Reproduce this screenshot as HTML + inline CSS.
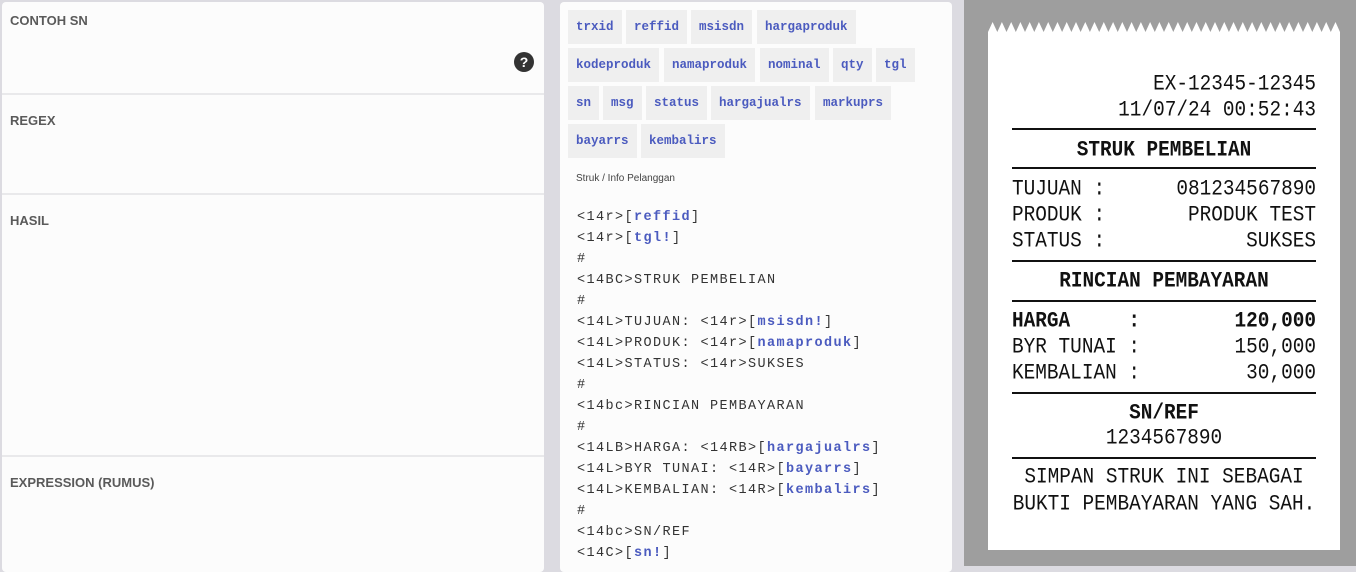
<!DOCTYPE html>
<html><head><meta charset="utf-8"><style>
*{margin:0;padding:0;box-sizing:border-box}
body{width:1356px;height:566px;overflow:hidden;background:#dcdbe1;position:relative;font-family:"Liberation Sans",sans-serif}
.lp{position:absolute;left:2px;top:2px;width:542px;height:570px;background:#fcfcfc;border-radius:4px}
.sec{position:absolute;left:0;width:542px;border-top:2px solid #e9e9eb}
.lbl{position:absolute;left:8px;font-size:13px;font-weight:bold;color:#5a5a5a}
.mp{position:absolute;left:560px;top:2px;width:392px;height:570px;background:#fcfcfc;border-radius:4px}
.chip{position:absolute;height:34px;background:#efefef;font-family:"Liberation Mono",monospace;font-weight:bold;font-size:12.5px;color:#4b5bbf;line-height:34px;padding:0 8px}
.code{position:absolute;left:17px;top:205px;font-family:"Liberation Mono",monospace;font-size:13.5px;letter-spacing:1.4px;line-height:21px;color:#333;white-space:pre}
.code b{color:#4b5bbf}
.rp{position:absolute;left:964px;top:0;width:392px;height:566px;background:#9e9e9e}
.rc{position:absolute;left:988px;top:34px;width:352px;height:516px;background:#fff}
.t{position:absolute;left:1012px;width:304px;font-family:"Liberation Mono",monospace;font-size:19.4px;color:#111;line-height:26px;white-space:pre;display:flex;transform:scaleY(1.12)}
.t .l{flex:0 0 auto}
.t .r{flex:1;text-align:right}
.c{justify-content:center}
.hr{position:absolute;left:1012px;width:304px;height:2px;background:#111}
</style></head><body>
<div class="lp">
<div class="lbl" style="top:11px">CONTOH SN</div>
<svg style="position:absolute;left:512px;top:50px" width="20" height="20" viewBox="0 0 20 20"><circle cx="10" cy="10" r="10" fill="#333"/><text x="10" y="15" text-anchor="middle" font-family="Liberation Sans" font-weight="bold" font-size="14" fill="#fff">?</text></svg>
<div class="sec" style="top:91px"></div>
<div class="lbl" style="top:111px">REGEX</div>
<div class="sec" style="top:191px"></div>
<div class="lbl" style="top:211px">HASIL</div>
<div class="sec" style="top:453px"></div>
<div class="lbl" style="top:473px">EXPRESSION (RUMUS)</div>
</div>
<div class="mp">
<div class="chip" style="left:8px;top:8px">trxid</div>
<div class="chip" style="left:66px;top:8px">reffid</div>
<div class="chip" style="left:131px;top:8px">msisdn</div>
<div class="chip" style="left:197px;top:8px">hargaproduk</div>
<div class="chip" style="left:8px;top:46px">kodeproduk</div>
<div class="chip" style="left:104px;top:46px">namaproduk</div>
<div class="chip" style="left:200px;top:46px">nominal</div>
<div class="chip" style="left:273px;top:46px">qty</div>
<div class="chip" style="left:316px;top:46px">tgl</div>
<div class="chip" style="left:8px;top:84px">sn</div>
<div class="chip" style="left:43px;top:84px">msg</div>
<div class="chip" style="left:86px;top:84px">status</div>
<div class="chip" style="left:151px;top:84px">hargajualrs</div>
<div class="chip" style="left:255px;top:84px">markuprs</div>
<div class="chip" style="left:8px;top:122px">bayarrs</div>
<div class="chip" style="left:81px;top:122px">kembalirs</div>
<div style="position:absolute;left:16px;top:171px;font-size:10px;color:#444">Struk / Info Pelanggan</div>
<div class="code">&lt;14r&gt;[<b>reffid</b>]
&lt;14r&gt;[<b>tgl!</b>]
#
&lt;14BC&gt;STRUK PEMBELIAN
#
&lt;14L&gt;TUJUAN: &lt;14r&gt;[<b>msisdn!</b>]
&lt;14L&gt;PRODUK: &lt;14r&gt;[<b>namaproduk</b>]
&lt;14L&gt;STATUS: &lt;14r&gt;SUKSES
#
&lt;14bc&gt;RINCIAN PEMBAYARAN
#
&lt;14LB&gt;HARGA: &lt;14RB&gt;[<b>hargajualrs</b>]
&lt;14L&gt;BYR TUNAI: &lt;14R&gt;[<b>bayarrs</b>]
&lt;14L&gt;KEMBALIAN: &lt;14R&gt;[<b>kembalirs</b>]
#
&lt;14bc&gt;SN/REF
&lt;14C&gt;[<b>sn!</b>]</div>
</div>
<div class="rp"></div>
<svg style="position:absolute;left:988px;top:22px" width="352" height="13" viewBox="0 0 352 13"><path d="M0 13 L0 10 L4.6 0 L9.3 10 L13.9 0 L18.5 10 L23.2 0 L27.8 10 L32.4 0 L37 10 L41.7 0 L46.3 10 L50.9 0 L55.6 10 L60.2 0 L64.8 10 L69.5 0 L74.1 10 L78.7 0 L83.4 10 L88 0 L92.6 10 L97.3 0 L101.9 10 L106.5 0 L111.2 10 L115.8 0 L120.4 10 L125.1 0 L129.7 10 L134.3 0 L139 10 L143.6 0 L148.2 10 L152.9 0 L157.5 10 L162.1 0 L166.8 10 L171.4 0 L176 10 L180.7 0 L185.3 10 L189.9 0 L194.6 10 L199.2 0 L203.8 10 L208.5 0 L213.1 10 L217.7 0 L222.4 10 L227 0 L231.6 10 L236.3 0 L240.9 10 L245.5 0 L250.2 10 L254.8 0 L259.4 10 L264.1 0 L268.7 10 L273.3 0 L278 10 L282.6 0 L287.2 10 L291.9 0 L296.5 10 L301.1 0 L305.8 10 L310.4 0 L315 10 L319.7 0 L324.3 10 L328.9 0 L333.6 10 L338.2 0 L342.8 10 L347.5 0 L352 10 L352 13 Z" fill="#fff"/></svg>
<div class="rc"></div>
<div class="t" style="top:71px"><span class="r">EX-12345-12345</span></div>
<div class="t" style="top:97px"><span class="r">11/07/24 00:52:43</span></div>
<div class="hr" style="top:128px"></div>
<div class="t c" style="top:137px;font-weight:bold">STRUK PEMBELIAN</div>
<div class="hr" style="top:167px"></div>
<div class="t" style="top:176px"><span class="l">TUJUAN :</span><span class="r">081234567890</span></div>
<div class="t" style="top:202px"><span class="l">PRODUK :</span><span class="r">PRODUK TEST</span></div>
<div class="t" style="top:228px"><span class="l">STATUS :</span><span class="r">SUKSES</span></div>
<div class="hr" style="top:260px"></div>
<div class="t c" style="top:268px;font-weight:bold">RINCIAN PEMBAYARAN</div>
<div class="hr" style="top:300px"></div>
<div class="t" style="top:308px;font-weight:bold"><span class="l">HARGA     :</span><span class="r">120,000</span></div>
<div class="t" style="top:334px"><span class="l">BYR TUNAI :</span><span class="r">150,000</span></div>
<div class="t" style="top:360px"><span class="l">KEMBALIAN :</span><span class="r">30,000</span></div>
<div class="hr" style="top:392px"></div>
<div class="t c" style="top:400px;font-weight:bold">SN/REF</div>
<div class="t c" style="top:425px">1234567890</div>
<div class="hr" style="top:457px"></div>
<div class="t c" style="top:464px">SIMPAN STRUK INI SEBAGAI</div>
<div class="t c" style="top:491px">BUKTI PEMBAYARAN YANG SAH.</div>
</body></html>
